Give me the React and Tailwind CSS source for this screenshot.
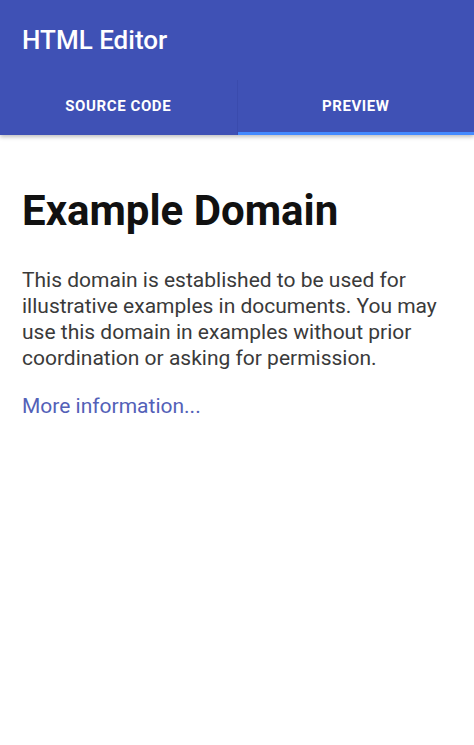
import React from 'react';

const App = () => {
  return (
    <div className="min-h-[745px] bg-white" style={{ fontFamily: 'Roboto, "Liberation Sans", sans-serif' }}>
      <div className="bg-[#3f51b5] shadow-[0_2px_4px_rgba(0,0,0,0.25)]">
        <div className="h-[80px] flex items-center px-[22px]">
          <h1 className="text-[26px] text-white font-medium">HTML Editor</h1>
        </div>
        <div className="flex h-[55px]">
          <div className="flex-1 flex items-center justify-center border-r border-[#3a4bad] pb-[3px]">
            <span className="text-[15px] font-bold text-white tracking-[0.6px]">SOURCE CODE</span>
          </div>
          <div className="flex-1 flex flex-col">
            <div className="flex-1 flex items-center justify-center">
              <span className="text-[15px] font-bold text-white tracking-[0.6px]">PREVIEW</span>
            </div>
            <div className="h-[3px] bg-[#448aff]" />
          </div>
        </div>
      </div>
      <div className="px-[22px] pt-[51px]">
        <h2 className="text-[42px] font-bold text-[#111] leading-[50px]">Example Domain</h2>
        <p className="mt-[31px] text-[21px] leading-[26px] text-[#3a3a3a]">
          This domain is established to be used for illustrative examples in documents. You may use this domain in examples without prior coordination or asking for permission.
        </p>
        <p className="mt-[22px] text-[21px] leading-[26px]">
          <a className="text-[#5361b8]">More information...</a>
        </p>
      </div>
    </div>
  );
};

export default App;
